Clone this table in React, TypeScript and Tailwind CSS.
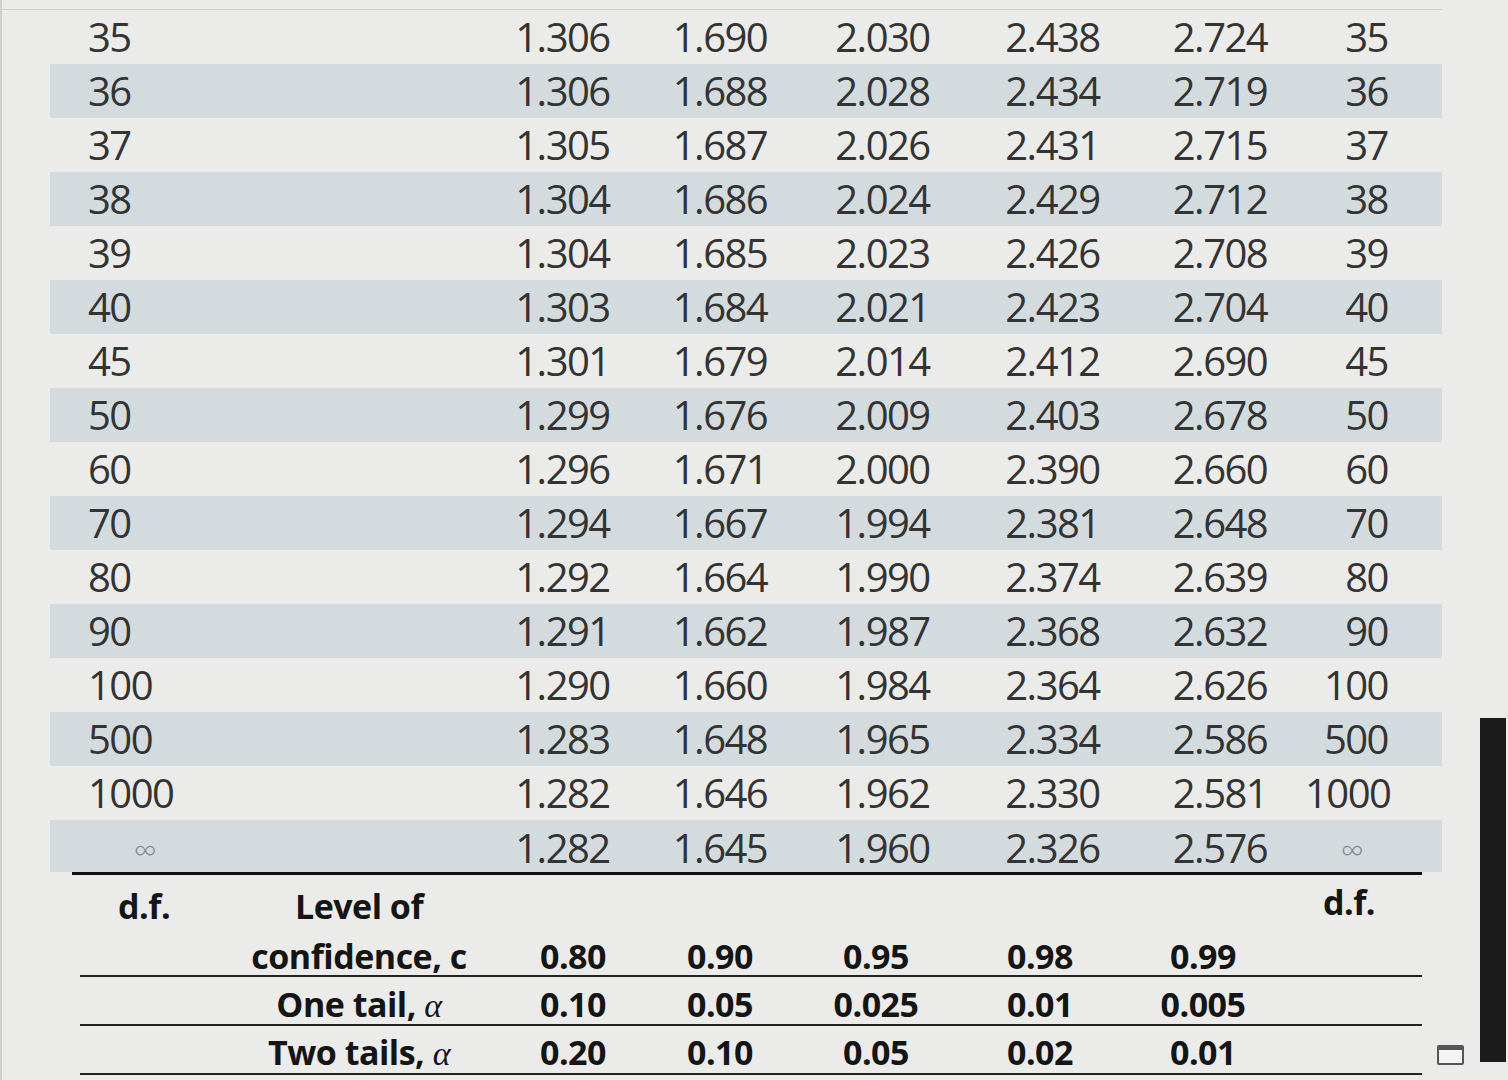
import React from 'react'

const rows: [string, string, string, string, string, string][] = [
  ['35', '1.306', '1.690', '2.030', '2.438', '2.724'],
  ['36', '1.306', '1.688', '2.028', '2.434', '2.719'],
  ['37', '1.305', '1.687', '2.026', '2.431', '2.715'],
  ['38', '1.304', '1.686', '2.024', '2.429', '2.712'],
  ['39', '1.304', '1.685', '2.023', '2.426', '2.708'],
  ['40', '1.303', '1.684', '2.021', '2.423', '2.704'],
  ['45', '1.301', '1.679', '2.014', '2.412', '2.690'],
  ['50', '1.299', '1.676', '2.009', '2.403', '2.678'],
  ['60', '1.296', '1.671', '2.000', '2.390', '2.660'],
  ['70', '1.294', '1.667', '1.994', '2.381', '2.648'],
  ['80', '1.292', '1.664', '1.990', '2.374', '2.639'],
  ['90', '1.291', '1.662', '1.987', '2.368', '2.632'],
  ['100', '1.290', '1.660', '1.984', '2.364', '2.626'],
  ['500', '1.283', '1.648', '1.965', '2.334', '2.586'],
  ['1000', '1.282', '1.646', '1.962', '2.330', '2.581'],
  ['∞', '1.282', '1.645', '1.960', '2.326', '2.576'],
]

// table body columns
const cols = 'grid grid-cols-[430px_165px_150px_175px_165px_170px_135px]'
// footer columns (values sit a bit differently in the photo)
const foot = 'grid grid-cols-[448px_150px_144px_168px_160px_166px_154px]'
const labelCol = 'grid grid-cols-[170px_278px]'

const Alpha = () => (
  <span className="font-['Liberation_Serif',serif] italic font-normal">α</span>
)

const Rule = ({ thick }: { thick?: boolean }) => (
  <div className={thick ? 'ml-[22px] w-[1350px] h-[3px] bg-[#111]' : 'ml-[30px] w-[1342px] h-[2px] bg-[#222]'} />
)

const Vals = ({ v }: { v: string[] }) => (
  <>
    {v.map((x, i) => (
      <div key={i} className="text-center">
        {x}
      </div>
    ))}
  </>
)

export default function App() {
  return (
    <div className="relative w-[1508px] h-[1080px] overflow-hidden bg-[#ebebe9] flex font-['Open_Sans',sans-serif] text-[#333]">
      <div className="w-[1470px] border-l-2 border-[#cfcfcd] pt-[9px]">
        <div className="border-t border-[#cdcdcb] pl-[48px] w-[1440px]">
          {rows.map((r, i) => {
            const inf = r[0] === '∞'
            return (
              <div
                key={r[0]}
                className={`${cols} ${inf ? 'h-[52px] items-end pb-[2px]' : 'h-[54px] items-center'} text-[40px] font-normal tracking-[-1.5px] leading-[44px] ${i % 2 === 1 ? 'bg-[#d3dbde]' : ''}`}
              >
                <div className={inf ? 'pl-[84px] text-[32px] font-light text-[#888] leading-[40px]' : 'pl-[38px]'}>{r[0]}</div>
                <Vals v={r.slice(1)} />
                <div className={inf ? 'text-right pr-[78px] text-[32px] font-light text-[#888] leading-[40px]' : 'text-right pr-[52px]'}>
                  {r[0]}
                </div>
              </div>
            )
          })}
        </div>
        <div className="pl-[48px] w-[1440px] text-[34px] font-bold text-[#151515] tracking-[-0.5px] leading-[40px]">
          <Rule thick />
          <div className={`${foot} h-[61px] pt-[11px] items-start`}>
            <div className={labelCol}>
              <div className="pl-[68px]">d.f.</div>
              <div className="text-center">Level of</div>
            </div>
            <div />
            <div />
            <div />
            <div />
            <div />
            <div className="text-right pr-[65px] -translate-y-[4px]">d.f.</div>
          </div>
          <div className={`${foot} h-[39px] items-start`}>
            <div className={labelCol}>
              <div />
              <div className="text-center whitespace-nowrap">confidence, c</div>
            </div>
            <Vals v={['0.80', '0.90', '0.95', '0.98', '0.99']} />
            <div />
          </div>
          <Rule />
          <div className={`${foot} h-[47px] pt-[7px] items-start`}>
            <div className={labelCol}>
              <div />
              <div className="text-center whitespace-nowrap">
                One tail, <Alpha />
              </div>
            </div>
            <Vals v={['0.10', '0.05', '0.025', '0.01', '0.005']} />
            <div />
          </div>
          <Rule />
          <div className={`${foot} h-[47px] pt-[6px] items-start`}>
            <div className={labelCol}>
              <div />
              <div className="text-center whitespace-nowrap">
                Two tails, <Alpha />
              </div>
            </div>
            <Vals v={['0.20', '0.10', '0.05', '0.02', '0.01']} />
            <div />
          </div>
          <Rule />
        </div>
      </div>
      <div className="flex-1 flex flex-col justify-end pb-[18px] pl-[10px]">
        <div className="w-[26px] h-[344px] bg-[#1b1b1b]" />
      </div>
      <div className="absolute left-[1437px] top-[1045px] w-[27px] h-[20px] border-2 border-[#555] border-t-[5px] rounded-[2px] bg-[#f4f4f4]" />
    </div>
  )
}
